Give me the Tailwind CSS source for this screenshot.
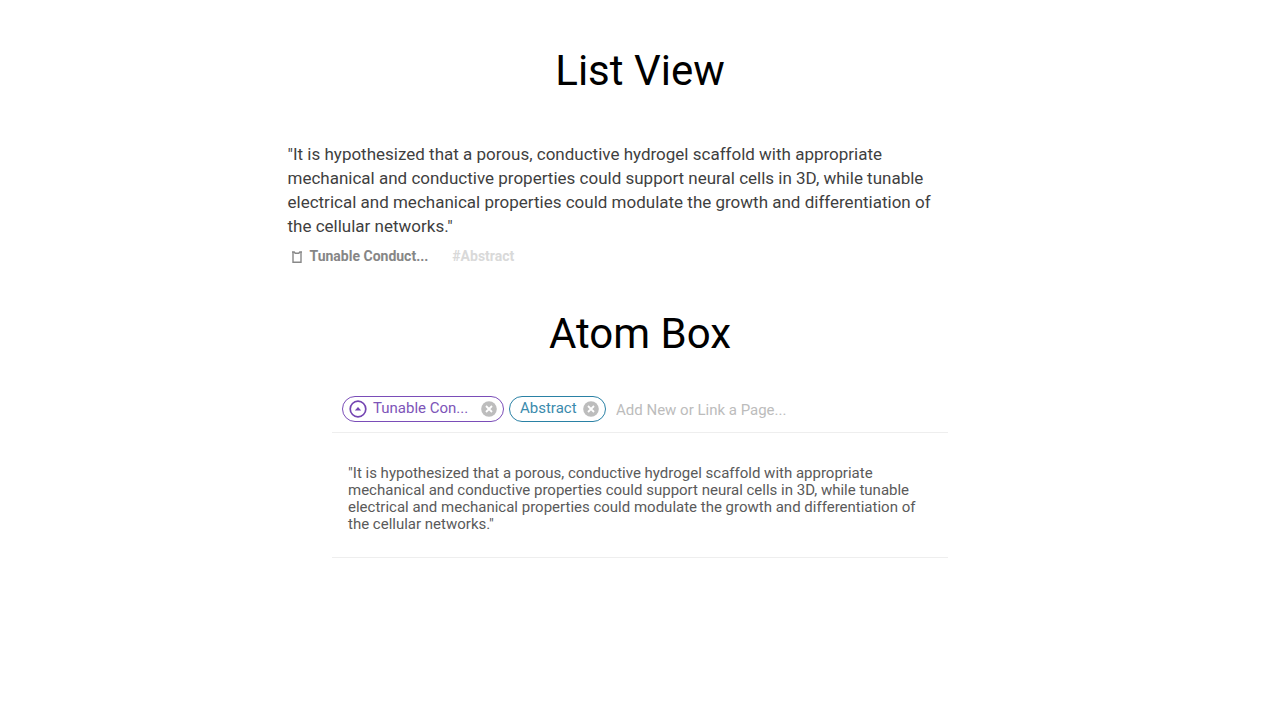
<!DOCTYPE html>
<html lang="en">
<head>
    <meta charset="UTF-8">
    <meta name="viewport" content="width=device-width, initial-scale=1.0">
    <title>List View and Atom Box</title>
    <script src="https://cdn.jsdelivr.net/npm/@tailwindcss/browser@4"></script>
</head>
<body class="bg-white min-h-screen font-[Roboto,sans-serif]">
    <main class="px-6 pt-[46px] pb-10">
        <!-- List view -->
        <section>
            <h1 class="text-[42px] leading-[50px] text-black text-center">List View</h1>
            <div class="mx-auto mt-[46px] max-w-[705px]">
                <p class="text-[17px] leading-6 text-[#3f3f3f]">
                    "It is hypothesized that a porous, conductive hydrogel scaffold with appropriate<br>
                    mechanical and conductive properties could support neural cells in 3D, while tunable<br>
                    electrical and mechanical properties could modulate the growth and differentiation of<br>
                    the cellular networks."
                </p>
                <div class="mt-2 flex items-center text-sm font-bold">
                    <a href="#" class="flex items-center gap-2 pl-1 text-[#868686]">
                        <svg class="w-[10px] h-3 mt-[2px]" viewBox="0 0 10 12" fill="none" stroke="#888888" stroke-width="1.4" aria-hidden="true">
                            <path d="M1 1v10.3h8V1M0 1h2.2l1 1.2h3.6l1-1.2H10"/>
                        </svg>
                        Tunable Conduct...
                    </a>
                    <a href="#" class="ml-6 text-[#d9d9d9]">#Abstract</a>
                </div>
            </div>
        </section>

        <!-- Atom box -->
        <section class="mt-[43px]">
            <h2 class="text-[42px] leading-[50px] text-black text-center">Atom Box</h2>
            <div class="mx-auto mt-[37px] max-w-[616px] text-[15px]">
                <div class="flex items-center px-[10px] pb-[10px] border-b border-[#eeeeee]">
                    <span class="flex items-center h-[26px] w-[162px] shrink-0 rounded-full border border-[#7a4db8] pb-px pl-[6px] pr-[6px] text-[#7d55b8]">
                        <svg class="w-[18px] h-[18px] mr-[6px]" viewBox="0 0 18 18" aria-hidden="true">
                            <circle cx="9" cy="9" r="7.8" fill="none" stroke="#7445b2" stroke-width="1.7"/>
                            <path d="M5.8 10.4L9 7l3.2 3.4z" fill="#7445b2"/>
                        </svg>
                        Tunable Con...
                        <button type="button" class="ml-auto" aria-label="Remove Tunable Con...">
                            <svg class="w-4 h-4" viewBox="0 0 16 16">
                                <circle cx="8" cy="8" r="7.8" fill="#bdbdbd"/>
                                <path d="M5 5l6 6M11 5l-6 6" stroke="#ffffff" stroke-width="1.8"/>
                            </svg>
                        </button>
                    </span>
                    <span class="ml-[5px] flex items-center h-[26px] w-[97px] shrink-0 rounded-full border border-[#2a81a5] pb-px pl-[10px] pr-[6px] text-[#3b8bad]">
                        Abstract
                        <button type="button" class="ml-auto" aria-label="Remove Abstract">
                            <svg class="w-4 h-4" viewBox="0 0 16 16">
                                <circle cx="8" cy="8" r="7.8" fill="#bdbdbd"/>
                                <path d="M5 5l6 6M11 5l-6 6" stroke="#ffffff" stroke-width="1.8"/>
                            </svg>
                        </button>
                    </span>
                    <input type="text" aria-label="Add new or link a page" placeholder="Add New or Link a Page..." class="ml-[10px] pt-[2px] h-[26px] min-w-0 flex-1 text-[#555555] placeholder:text-[#bcbcbc] outline-none">
                </div>
                <p class="px-4 pt-8 pb-6 leading-[17px] text-[#5a5a5a] border-b border-[#eeeeee]">
                    "It is hypothesized that a porous, conductive hydrogel scaffold with appropriate<br>
                    mechanical and conductive properties could support neural cells in 3D, while tunable<br>
                    electrical and mechanical properties could modulate the growth and differentiation of<br>
                    the cellular networks."
                </p>
            </div>
        </section>
    </main>
</body>
</html>
